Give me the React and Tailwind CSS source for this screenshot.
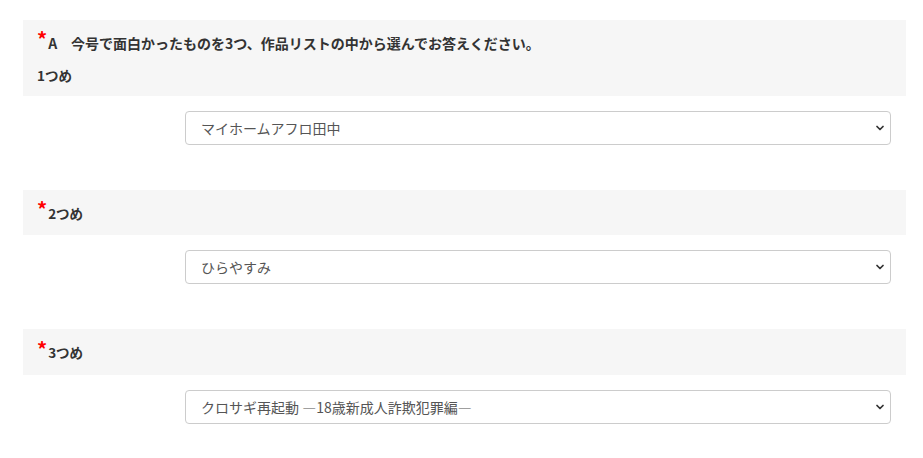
import { ChevronDown } from 'lucide-react';

const QUESTIONS = [
  { label: '1つめ', value: 'マイホームアフロ田中', head: true },
  { label: '2つめ', value: 'ひらやすみ', h: 'h-[45px]' },
  { label: '3つめ', value: 'クロサギ再起動 ―18歳新成人詐欺犯罪編―', h: 'h-[46px]' },
];

const Star = () => (
  <span className="text-[20px] leading-none text-[#ff0000] relative top-[-4px] mr-[1px]">*</span>
);

const Pick = ({ value }) => (
  <div className="flex pl-[162px] pr-[15px] pt-[15px]">
    <div className="relative flex-1">
      <div className="h-[34px] flex items-center pl-[15px] text-[14px] text-[#555] border border-[#ccc] rounded-[4px] bg-white">
        {value}
      </div>
      <ChevronDown size={12} strokeWidth={3.5} className="absolute right-[5px] top-[11px] text-[#333]" />
    </div>
  </div>
);

export default function App() {
  return (
    <div
      className="bg-white pt-[20px] pl-[23px] pr-[17px] text-[#333]"
      style={{ fontFamily: '"Noto Sans CJK JP", "Noto Sans", sans-serif' }}
    >
      {QUESTIONS.map((q, i) => (
        <div key={i} className={i > 0 ? 'mt-[45px]' : ''}>
          <div className="bg-[#f6f6f6] px-[14px] font-bold text-[13.5px]">
            {q.head ? (
              <div className="pt-[11px] pb-[9px]">
                <div className="h-[24px] flex items-center">
                  <Star />
                  <span className="text-[14px]">A　今号で面白かったものを3つ、作品リストの中から選んでお答えください。</span>
                </div>
                <div className="h-[24px] mt-[8px] flex items-center">{q.label}</div>
              </div>
            ) : (
              <div className={`${q.h} flex items-center pt-[1px]`}>
                <Star />
                <span>{q.label}</span>
              </div>
            )}
          </div>
          <Pick value={q.value} />
        </div>
      ))}
    </div>
  );
}
